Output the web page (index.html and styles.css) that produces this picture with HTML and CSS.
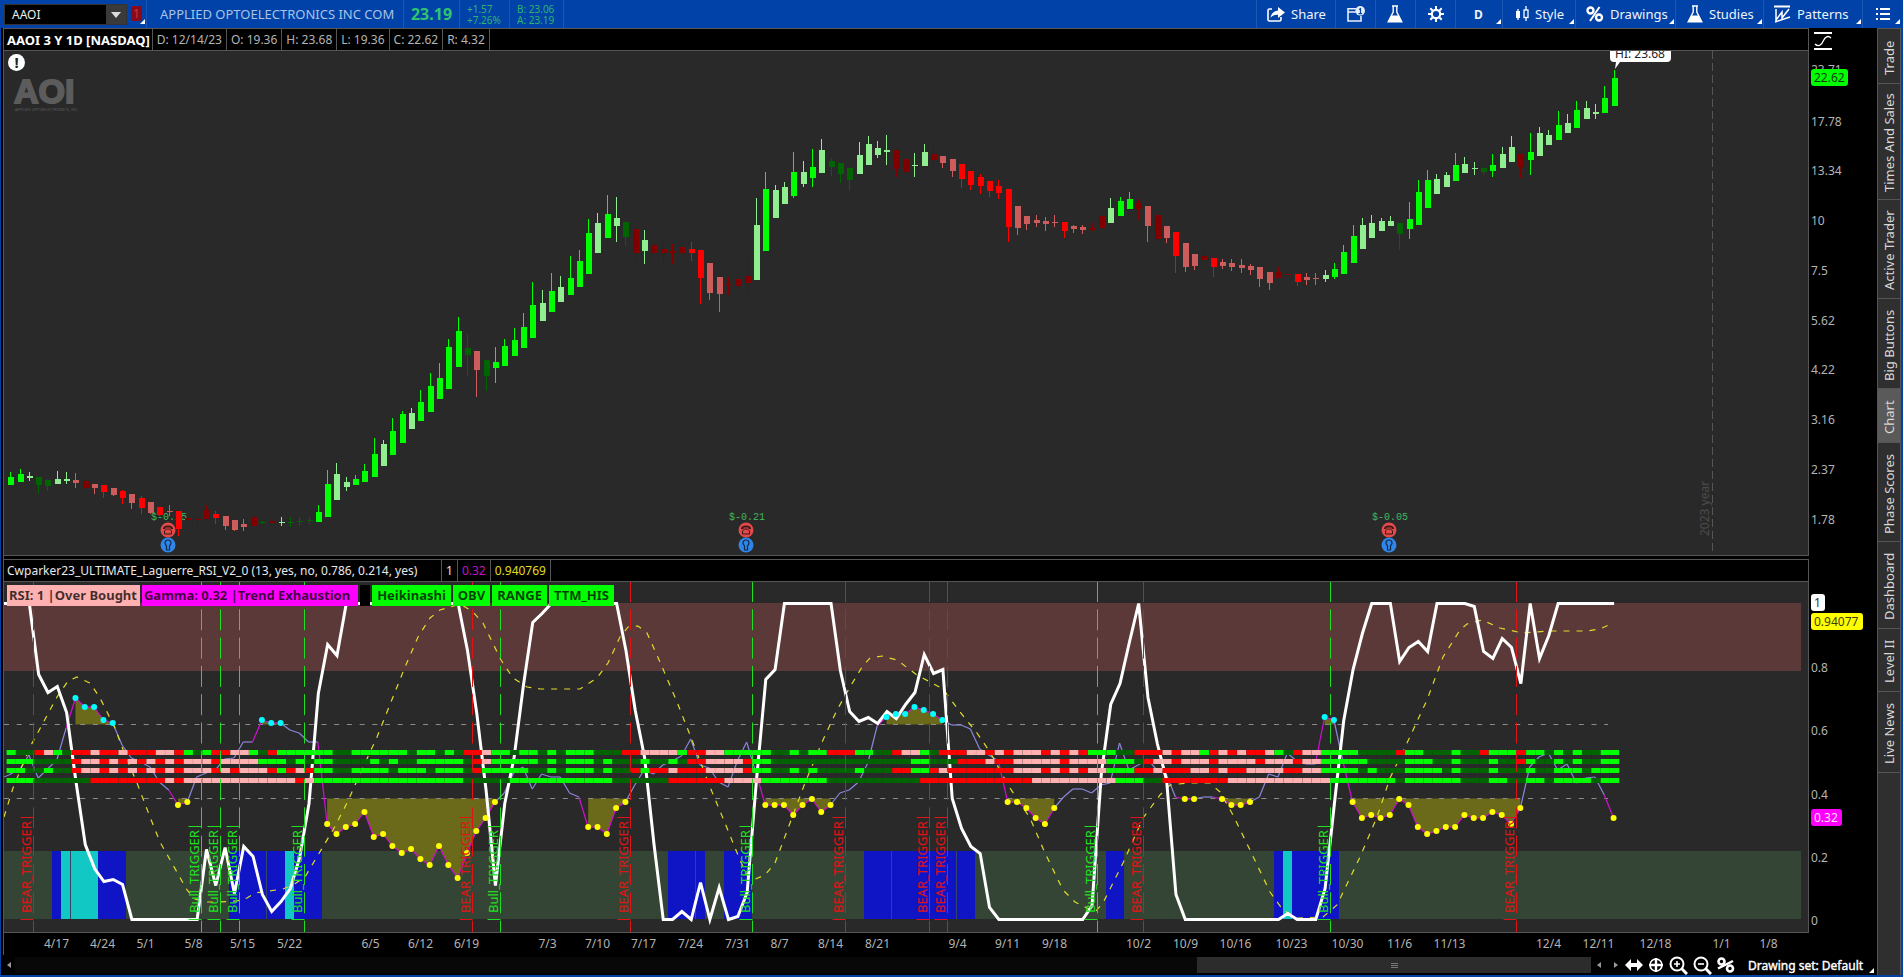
FILE: index.html
```html
<!DOCTYPE html>
<html lang="en">
<head>
    <meta charset="UTF-8">
    <meta name="viewport" content="width=device-width, initial-scale=1.0">
    <title>AAOI Chart</title>
    <link rel="stylesheet" href="styles.css">
</head>
<body>
    <header class="topbar">
        <div class="symbol-box">
            <input class="symbol-input" type="text" value="AAOI" aria-label="Symbol">
            <button class="symbol-arrow" aria-label="Symbol list"><svg width="10" height="6"><path d="M0 0H10L5 6Z" fill="#ddd"/></svg></button>
        </div>
        <button class="link-color corner" aria-label="Link 1"><span>1</span></button>
        <div class="company">APPLIED OPTOELECTRONICS INC COM</div>
        <div class="last">23.19</div>
        <div class="pair change"><span>+1.57</span><span>+7.26%</span></div>
        <div class="pair bidask"><span>B: 23.06</span><span>A: 23.19</span></div>
        <nav class="tools">
            <button class="tool w-share">
                <svg width="18" height="16" viewBox="0 0 18 16"><path d="M5 3H2.500Q1 3 1 4.500V13.500Q1 15 2.500 15H12.500Q14 15 14 13.500V11" fill="none" stroke="#fff" stroke-width="1.600"/><path d="M11 1L18 6.500L11 12V8.800Q6 8.500 3.500 12Q4.500 5 11 4.500Z" fill="#fff"/></svg>
                Share
            </button>
            <button class="tool w-icon" aria-label="News">
                <svg width="18" height="16" viewBox="0 0 18 16"><path d="M9 2.700H1V15H14V10M1 6H9" fill="none" stroke="#e8eefa" stroke-width="1.600"/><circle cx="13.200" cy="4.800" r="4.800" fill="#e8eefa"/><path d="M12 3.500L13.500 2.500V7.500M11.500 7.600H15.200" fill="none" stroke="#0042a8" stroke-width="1.200"/></svg>
            </button>
            <button class="tool w-icon" aria-label="Lab">
                <svg width="16" height="18" viewBox="0 0 16 18"><path d="M5 1H11M6.200 1V7L1.200 16.800H14.800L9.800 7V1" fill="none" stroke="#fff" stroke-width="1.400"/><path d="M4.500 10.500H11.500L15 17H1Z" fill="#fff"/></svg>
            </button>
            <button class="tool w-icon" aria-label="Settings">
                <svg width="18" height="18" viewBox="0 0 18 18"><circle cx="9" cy="9" r="4.200" fill="none" stroke="#fff" stroke-width="2.200"/><path d="M9 1V4M9 14V17M1 9H4M14 9H17M3.300 3.300L5.500 5.500M12.500 12.500L14.700 14.700M14.700 3.300L12.500 5.500M5.500 12.500L3.300 14.700" stroke="#fff" stroke-width="2"/></svg>
            </button>
            <button class="tool w-day corner"><b>D</b></button>
            <button class="tool w-style corner">
                <svg width="14" height="16" viewBox="0 0 14 16"><path d="M3 3V14M11 0V4M11 12V15" stroke="#fff" stroke-width="1.300"/><rect x="1" y="5" width="4" height="7" fill="#fff"/><rect x="9" y="4" width="4" height="7.500" fill="none" stroke="#fff" stroke-width="1.300"/></svg>
                Style
            </button>
            <button class="tool w-draw corner">
                <svg width="18" height="16" viewBox="0 0 18 16"><circle cx="4.500" cy="4.500" r="3" fill="none" stroke="#fff" stroke-width="2.400"/><circle cx="13" cy="11.500" r="3" fill="none" stroke="#fff" stroke-width="2.400"/><path d="M13.500 1L4 15" stroke="#fff" stroke-width="2"/></svg>
                Drawings
            </button>
            <button class="tool w-study corner">
                <svg width="16" height="18" viewBox="0 0 16 18"><path d="M5 1H11M6.200 1V7L1.200 16.800H14.800L9.800 7V1" fill="none" stroke="#fff" stroke-width="1.400"/><path d="M4.500 10.500H11.500L15 17H1Z" fill="#fff"/></svg>
                Studies
            </button>
            <button class="tool w-pattern corner">
                <svg width="17" height="18" viewBox="0 0 17 18"><path d="M0 1.500H16" stroke="#fff" stroke-width="2"/><path d="M2 4V15L8 7V13L15 4M1 17L16 12" fill="none" stroke="#fff" stroke-width="1.500"/></svg>
                Patterns
            </button>
            <button class="tool w-list corner" aria-label="Menu">
                <svg width="14" height="14" viewBox="0 0 14 14"><path d="M0 2H2M4 2H14M0 7H2M4 7H14M0 12H2M4 12H14" stroke="#fff" stroke-width="2"/></svg>
            </button>
        </nav>
    </header>

    <main class="workspace">
        <div class="chart-column">
            <div class="chart-area">
                <section class="panels">
                    <div class="info price-info">
                        <h1>AAOI 3 Y 1D [NASDAQ]</h1>
                        <span>D: 12/14/23</span>
                        <span>O: 19.36</span>
                        <span>H: 23.68</span>
                        <span>L: 19.36</span>
                        <span>C: 22.62</span>
                        <span>R: 4.32</span>
                    </div>
                    <svg class="plot price-plot" id="price" viewBox="4 51 1804 504"></svg>
                    <div class="info rsi-info">
                        <span class="study study-name">Cwparker23_ULTIMATE_Laguerre_RSI_V2_0 (13, yes, no, 0.786, 0.214, yes)</span>
                        <span class="study">1</span>
                        <span class="gamma">0.32</span>
                        <span class="fourier">0.940769</span>
                    </div>
                    <div class="rsi-wrap">
                        <svg class="plot" id="rsi" viewBox="4 582 1804 350"></svg>
                        <div class="labels">
                            <span class="pink">RSI: 1 |Over Bought</span>
                            <span class="magenta">Gamma: 0.32 |Trend Exhaustion</span>
                            <span class="blank"></span>
                            <span class="green">Heikinashi</span>
                            <span class="green">OBV</span>
                            <span class="green">RANGE</span>
                            <span class="green">TTM_HIS</span>
                        </div>
                    </div>
                    <svg class="dates" id="dates" viewBox="4 933 1804 22"></svg>
                </section>
                <aside class="axis">
                    <button class="axis-mode" aria-label="Axis settings"><svg width="18" height="18" viewBox="0 0 18 18"><path d="M0 1H18M0 17H18" stroke="#fff" stroke-width="2"/><path d="M1 12C5 16 8 12 9.500 8.500C11 5 14 3 17 6" fill="none" stroke="#fff" stroke-width="1.300"/></svg></button>
                    <svg class="axis-plot" id="axis" viewBox="1809 51 68 904"></svg>
                </aside>
            </div>
            <footer class="bottom">
                <button class="arrow" aria-label="Scroll left"><svg width="5" height="6"><path d="M4 0V6L0 3Z" fill="#999"/></svg></button>
                <div class="track"><div class="thumb"><i></i></div></div>
                <button class="arrow" aria-label="Step left"><svg width="5" height="6"><path d="M4 0V6L0 3Z" fill="#999"/></svg></button>
                <button class="arrow" aria-label="Step right"><svg width="5" height="6"><path d="M1 0V6L5 3Z" fill="#999"/></svg></button>
                <div class="zoom-tools">
                    <button aria-label="Pan"><svg width="18" height="12" viewBox="0 0 18 12"><path d="M0 6L6 0V4H12V0L18 6L12 12V8H6V12Z" fill="#fff"/></svg></button>
                    <button aria-label="Crosshair"><svg width="16" height="16" viewBox="0 0 16 16"><circle cx="8" cy="8" r="6" fill="none" stroke="#fff" stroke-width="1.600"/><path d="M8 1V15M1 8H15" stroke="#fff" stroke-width="2.400"/></svg></button>
                    <button aria-label="Zoom in"><svg width="19" height="19" viewBox="0 0 19 19"><circle cx="8" cy="8" r="6.500" fill="none" stroke="#fff" stroke-width="2"/><path d="M12.500 12.500L18 18" stroke="#fff" stroke-width="3"/><path d="M8 5V11M5 8H11" stroke="#fff" stroke-width="1.600"/></svg></button>
                    <button aria-label="Zoom out"><svg width="19" height="19" viewBox="0 0 19 19"><circle cx="8" cy="8" r="6.500" fill="none" stroke="#fff" stroke-width="2"/><path d="M12.500 12.500L18 18" stroke="#fff" stroke-width="3"/><path d="M5 8H11" stroke="#fff" stroke-width="1.600"/></svg></button>
                    <button aria-label="Percent"><svg width="18" height="16" viewBox="0 0 18 16"><circle cx="4.500" cy="4.500" r="3" fill="none" stroke="#fff" stroke-width="2.600"/><circle cx="13" cy="11.500" r="3" fill="none" stroke="#fff" stroke-width="2.600"/><path d="M16 4L1 11.500" stroke="#fff" stroke-width="2.400"/></svg></button>
                </div>
                <button class="drawing-set corner">Drawing set: Default</button>
            </footer>
        </div>
        <nav class="sidebar">
            <button class="t1">Trade</button>
            <button class="t2">Times And Sales</button>
            <button class="t3">Active Trader</button>
            <button class="t4">Big Buttons</button>
            <button class="t5 active">Chart</button>
            <button class="t3">Phase Scores</button>
            <button class="t6">Dashboard</button>
            <button class="t7">Level II</button>
            <button class="t8">Live News</button>
        </nav>
    </main>
    <script src="script.js"></script>
</body>
</html>
```

FILE: styles.css
```css
* {
    box-sizing: border-box;
}
body {
    margin: 0;
    height: 100vh;
    display: flex;
    flex-direction: column;
    background: #000;
    border: solid #0042a8;
    border-width: 0 2px 2px 1px;
    font-family: "Noto Sans", "Open Sans", sans-serif;
    font-size: 12px;
    color: #b4b4b4;
    overflow: hidden;
}
button {
    border: none;
    background: none;
    padding: 0;
    margin: 0;
    font: inherit;
    color: inherit;
    cursor: pointer;
}
svg {
    display: block;
    flex: none;
}

/* top bar */
.topbar {
    display: flex;
    align-items: stretch;
    height: 28px;
    flex: none;
    background: #0042a8;
}
.symbol-box {
    display: flex;
    width: 123px;
    margin: 4px 4px 3px 3px;
    background: #000;
    border: 1px solid #333;
}
.symbol-input {
    flex: 1;
    min-width: 0;
    border: none;
    background: #000;
    color: #eee;
    font: inherit;
    padding: 0 7px;
}
.symbol-arrow {
    width: 20px;
    background: #3a3a3a;
    display: flex;
    align-items: center;
    justify-content: center;
}
.corner {
    position: relative;
}
.corner::after {
    content: "";
    position: absolute;
    right: 1px;
    bottom: 4px;
    border: solid transparent;
    border-width: 0 0 5px 5px;
    border-bottom-color: #fff;
}
.link-color {
    width: 16px;
    display: flex;
    align-items: flex-start;
    padding-top: 6px;
    border-right: 1px solid #1c57b4;
}
.link-color span {
    width: 11px;
    height: 15px;
    line-height: 15px;
    border-radius: 2px;
    background: #8b0a1a;
    color: #c33;
}
.company {
    width: 257px;
    padding-left: 13px;
    line-height: 28px;
    font-size: 13px;
    color: #a9c2e6;
    border-right: 1px solid #1c57b4;
    white-space: nowrap;
}
.last {
    width: 56px;
    text-align: center;
    line-height: 28px;
    font-size: 16px;
    font-weight: bold;
    color: #2fc46e;
    border-right: 1px solid #1c57b4;
}
.pair {
    display: flex;
    flex-direction: column;
    justify-content: center;
    padding-left: 7px;
    padding-top: 2px;
    font-size: 10px;
    line-height: 11px;
    color: #2fb56a;
    border-right: 1px solid #1c57b4;
}
.change {
    width: 50px;
}
.bidask {
    width: 54px;
}
.tools {
    display: flex;
    margin-left: auto;
}
.tool {
    display: flex;
    align-items: center;
    gap: 6px;
    padding-left: 8px;
    border-left: 1px solid #1c57b4;
    color: #eef3fb;
    font-size: 13px;
}
.w-share { width: 79px; padding-left: 10px; }
.w-icon { width: 40px; padding-left: 11px; }
.w-day { width: 47px; padding-left: 18px; font-size: 12px; }
.w-style { width: 73px; padding-left: 12px; }
.w-draw { width: 100px; padding-left: 10px; }
.w-study { width: 88px; padding-left: 11px; }
.w-pattern { width: 99px; padding-left: 10px; }
.w-list { width: 39px; padding-left: 13px; }

/* charts */
.workspace {
    flex: 1;
    min-height: 0;
    display: flex;
}
.chart-column {
    flex: 1;
    min-width: 0;
    display: flex;
    flex-direction: column;
    padding-left: 2px;
}
.chart-area {
    flex: 1;
    min-height: 0;
    display: flex;
}
.panels {
    flex: 1;
    min-width: 0;
    display: flex;
    flex-direction: column;
    border-left: 1px solid #555;
}
.info {
    display: flex;
    flex: none;
    border-bottom: 1px solid #555;
    border-right: 1px solid #555;
}
.price-info {
    height: 23px;
    line-height: 22px;
    border-top: 1px solid #555;
}
.info h1 {
    margin: 0;
    padding: 0 2px 0 3px;
    font-size: 13px;
    color: #fff;
    border-right: 1px solid #555;
}
.info span {
    padding: 0 4px;
    border-right: 1px solid #555;
}
.rsi-info {
    height: 23px;
    line-height: 21px;
    margin-top: 3px;
    border-top: 1px solid #555;
}
.info .study {
    color: #e8e8e8;
}
.info .study-name {
    min-width: 438px;
    padding-left: 3px;
}
.info .gamma {
    color: #c012c8;
}
.info .fourier {
    color: #e0dc20;
}
.plot {
    width: 100%;
    min-height: 0;
    background: #292929;
    border-right: 1px solid #555;
    border-bottom: 1px solid #555;
}
.price-plot {
    flex: 504 1 0;
}
.rsi-wrap {
    position: relative;
    flex: 351 1 0;
    min-height: 0;
}
.rsi-wrap .plot {
    height: 100%;
}
.labels {
    position: absolute;
    left: 3px;
    top: 3px;
    display: flex;
    gap: 2px;
    font-size: 13px;
    font-weight: bold;
    color: rgba(0, 0, 0, 0.75);
}
.labels span {
    height: 21px;
    line-height: 21px;
    padding: 0 5px;
    white-space: nowrap;
}
.labels .pink { background: #ffb0b0; padding: 0 3px 0 2px; }
.labels .magenta { background: #ff00ff; padding: 0 8px 0 2px; }
.labels .blank { background: #000; }
.labels .green { background: #00ff00; }
.dates {
    width: 100%;
    height: 22px;
}
.axis {
    width: 68px;
    flex: none;
    display: flex;
    flex-direction: column;
}
.axis-mode {
    height: 23px;
    padding: 2px 0 0 5px;
}
.axis-plot {
    width: 100%;
    flex: 1;
    min-height: 0;
}
svg text {
    font-size: 12px;
    fill: #b4b4b4;
}
svg .trigger {
    font-size: 13px;
}
svg .logo {
    font: bold 34px "Liberation Sans", sans-serif;
    fill: #5c5c5c;
    stroke: #5c5c5c;
    stroke-width: 2px;
}
svg .logo-small {
    font-size: 4px;
    fill: #5c5c5c;
}
svg .eps {
    font: 10px "Liberation Mono", monospace;
    fill: #3fb85e;
}
.mid {
    text-anchor: middle;
}

/* bottom row */
.bottom {
    height: 20px;
    flex: none;
    display: flex;
    align-items: center;
}
.arrow {
    width: 16px;
    height: 16px;
    display: flex;
    align-items: center;
    justify-content: center;
}
.bottom > .arrow:first-child {
    width: 12px;
}
.track {
    flex: 1;
    height: 16px;
    display: flex;
    justify-content: flex-end;
    background: #080808;
}
.thumb {
    width: 25%;
    background: #2c2c2c;
    display: flex;
    align-items: center;
    justify-content: center;
}
.thumb i {
    width: 7px;
    height: 5px;
    background: repeating-linear-gradient(#777 0 1px, #2c2c2c 1px 2px);
}
.zoom-tools {
    display: flex;
    align-items: center;
    gap: 5px;
    margin-left: 2px;
}
.drawing-set {
    width: 127px;
    margin: 0 2px 0 13px;
    text-align: left;
    color: #fff;
    -webkit-text-stroke: 0.4px #fff;
}
.drawing-set.corner::after {
    bottom: 1px;
}

/* right tabs */
.sidebar {
    width: 24px;
    flex: none;
    display: flex;
    flex-direction: column;
    background: #2f2f2f;
    border: solid #555;
    border-width: 1px 1px 0 1px;
}
.sidebar button {
    flex: none;
    writing-mode: vertical-rl;
    transform: rotate(180deg);
    border-top: 1px solid #555;
    padding-bottom: 3px;
    text-align: center;
    font-size: 13px;
    color: #d8d8d8;
}
.sidebar .active {
    background: #5a5a5a;
}
.t1 { height: 55px; }
.t2 { height: 116px; }
.t3 { height: 99px; }
.t4 { height: 90px; }
.t5 { height: 54px; }
.t6 { height: 87px; }
.t7 { height: 63px; }
.t8 { height: 81px; }
```

FILE: script.js
```js
const STEP = 9.322;
const xAt = i => 11.2 + STEP * i;
const colors = { G: "#00ff00", L: "#90ee90", D: "#006400", R: "#ff0000", P: "#cd5c5c", M: "#800000" };

// colour, high, body top, body bottom, low
const candles = `
G472,477,485,485 G469,474,482,482 L472,476,478,481 D477,477,485,493 D479,480,486,491 L471,479,484,484
L472,479,481,484 P473,480,483,488 M481,481,488,489 P484,484,488,494 R485,485,492,498 P488,488,495,496
R490,491,498,504 P494,494,503,509 R496,498,508,514 P502,502,513,514 R507,507,515,516 P505,511,512,516
R511,511,529,536 M517,518,520,521 M516,519,520,527 M505,510,519,519 R511,514,518,524 P516,516,526,530
P520,520,530,531 P519,524,527,531 M516,517,526,526 D521,522,523,524 M520,521,523,525 L517,522,523,526
D517,522,523,527 D517,521,522,526 D517,520,521,524 G505,512,522,522 G470,484,517,517 L463,474,500,500
L477,482,487,491 G475,479,485,485 G464,471,482,482 G438,454,477,477 L440,444,466,466 G418,431,455,455
G411,414,443,443 L408,413,429,429 G390,402,421,421 G373,386,412,412 G363,378,399,399 G339,347,389,389
G317,331,367,367 D334,348,355,376 P351,351,370,397 D360,360,376,391 G347,362,368,383 G339,346,366,366
G328,340,356,356 G313,327,348,348 G282,305,338,338 L290,303,321,321 G273,291,312,312 L276,287,302,302
G256,278,295,295 G250,261,287,287 G219,233,274,274 L213,223,253,253 G195,214,238,238 L197,218,226,242
D222,222,237,246 M228,229,253,268 L230,240,251,264 M244,245,253,261 M240,249,253,264 M244,251,253,264
M236,247,253,253 R242,249,253,261 R250,250,278,304 P263,263,293,300 P277,277,294,312 M277,284,285,295
M268,279,286,290 M256,276,283,295 L198,225,280,280 G172,189,251,251 L185,190,218,218 L182,187,204,204
G152,172,196,198 L161,172,184,187 G149,167,178,187 L139,150,173,173 D158,161,167,176 D163,163,174,183
D168,168,180,191 L142,155,174,174 L136,144,165,165 L141,148,155,158 L135,150,152,165 M150,150,169,177
M159,159,172,177 L153,165,166,177 L144,152,166,166 M141,154,160,167 P156,156,163,168 P159,159,171,177
R164,164,179,188 R171,171,185,190 R174,177,186,194 R181,181,191,197 R180,186,193,199 R189,189,227,242
P206,206,228,235 P216,216,224,230 P215,220,223,227 P217,221,224,231 P215,222,223,227 R222,222,231,238
P225,226,229,233 P225,227,230,234 M223,228,230,231 M213,216,228,228 L198,208,223,223 G197,201,216,216
G192,199,209,209 M199,203,209,220 P206,206,226,242 M215,215,239,246 P226,226,238,243 R232,232,256,273
P243,243,267,272 P254,254,266,270 M244,256,260,260 R258,258,267,277 P259,262,266,269 P259,263,267,271
P259,265,268,273 P264,266,270,275 P267,267,279,287 P272,272,283,290 M267,272,278,278 M271,274,275,278
R274,274,282,286 P273,277,280,285 P273,278,279,285 L270,275,279,282 G263,269,277,279 G245,252,274,274
G225,236,263,263 L218,225,249,249 L215,223,238,238 L218,221,231,231 L216,221,226,226 D223,223,234,250
G202,219,229,239 G180,192,225,225 G170,180,208,208 L174,179,194,194 L172,175,187,187 G153,165,181,181
L157,164,173,173 L162,168,169,175 D168,168,172,175 G154,165,171,177 L147,154,168,168 L136,147,162,162
M154,154,167,178 G133,152,160,175 L127,133,156,156 L130,135,145,145 G111,125,140,140 L114,123,133,133
G101,110,128,128 L101,108,119,119 L104,112,114,119 G86,98,113,113 G70,78,106,106`.trim().split(/\s+/);

function earnings(x, label) {
    return `<text class="mid eps" x="${x + 1}" y="520">${label}</text>
        <circle cx="${x}" cy="530" r="7.500" fill="#e04a4a"/>
        <path d="M${x - 5} 529Q${x - 5} 525.500 ${x} 525.500Q${x + 5} 525.500 ${x + 5} 529H${x + 2.500}V527.500H${x - 2.500}V529Z" fill="#3a1515"/>
        <path d="M${x - 3.500} 534V531L${x - 1.500} 529H${x + 1.500}L${x + 3.500} 531V534Z" fill="none" stroke="#3a1515"/>
        <circle cx="${x}" cy="545" r="7.500" fill="#2f86e8"/>
        <path d="M${x - 1.500} 547.500V546L${x - 3} 543.500Q${x - 3} 540 ${x} 540Q${x + 3} 540 ${x + 3} 543.500L${x + 1.500} 546V550H${x - 1.500}Z" fill="none" stroke="#10294a" stroke-width="1.200"/>`;
}

function drawPrice() {
    let s = `<path d="M1712.500 51V555" stroke="#555" stroke-dasharray="8 4"/>
        <text x="1709" y="536" transform="rotate(-90 1709 536)" style="fill:#4c4c4c">2023 year</text>
        <circle cx="16.500" cy="62.500" r="8.500" fill="#fff"/>
        <text class="mid" x="16.500" y="68" style="font-size:15px;font-weight:bold;fill:#222">!</text>
        <text class="logo" x="14" y="103">AOI</text>
        <text class="logo-small" x="15" y="111">APPLIED OPTOELECTRONICS, INC</text>`;
    s += earnings(168, "$-0.15") + earnings(746, "$-0.21") + earnings(1389, "$-0.05");
    s += '<g shape-rendering="crispEdges">';
    candles.forEach((c, i) => {
        const [hi, top, bottom, lo] = c.slice(1).split(",").map(Number);
        const x = Math.round(xAt(i));
        s += `<path fill="${colors[c[0]]}" d="M${x - 1} ${hi}h1V${lo}h-1ZM${x - 3} ${top}h6V${bottom}h-6Z"/>`;
    });
    s += "</g>";
    s += `<path d="M1610 44H1671V58Q1671 62 1667 62H1620L1615 69L1616 62H1614Q1610 62 1610 58Z" fill="#fff"/>
        <text x="1615" y="58" style="fill:#222">HI: 23.68</text>`;
    document.getElementById("price").innerHTML = s;
}

// run-length colours of the four indicator rows
const rows = [
    [750, "G1 D2 R1 P1 G1 D1 R2 P1 R2 P1 R3 P2 R1 G1 D1 G1 R2 P2 G1 D1 R1 G6 D2 G6 D1 G2 D1 G1 D1 R2 P1 G2 D1 G2 D1 G1 D1 G3 D3 R2 P4 G1 R2 P2 G5 D2 G1 D1 G2 R3 G2 D2 R1 P2 G1 D1 R3 P2 R1 P1 R1 P3 R1 P1 R1 P1 R1 G3 D2 R3 P1 R1 P2 G1 R1 P1 R1 P1 R2 P1 G1 D1 R1 P2 G4 D4 R1 G2 D3 G1 D2 R1 G3 R1 G2 D1 G1 D1 G1 D2 G2"],
    [759, "G3 D4 R1 P2 R1 P1 R1 P1 R1 P1 R1 P1 R1 P3 R1 P4 G3 D1 G1 D1 G2 D4 G1 D1 G1 D2 G5 D1 R1 P1 G5 D1 G1 D1 G3 D1 G1 D3 G1 D2 G1 D1 R2 P4 R1 G2 D15 G2 D3 R3 P1 R2 P5 R1 P4 G3 D1 R1 P2 R1 P3 R1 P4 R1 P3 R1 P2 G5 D4 G3 D2 G1 D3 G1 D2 R1 G1 D2 G1 D1 G1 D2 G2"],
    [768, "G2 D2 G1 D2 R1 P2 R1 P1 R1 P1 R1 P1 R1 P1 R1 P3 R1 P1 R1 P3 R1 G1 R1 P1 R1 G2 D2 G4 D1 G3 D1 G3 D1 R1 G5 D2 G1 D1 G3 D1 G1 D2 R1 G1 R2 P1 R3 P4 R1 G2 D2 G1 D1 G1 D4 G1 D3 R2 G2 R1 P1 R7 P3 R1 P1 R1 P1 R1 P2 G3 R2 P1 R3 P2 R1 P1 R2 P4 R2 P2 G4 D1 G1 D3 G4 D1 G1 D3 G1 D3 G1 D2 G3 D1 G3"],
    [778, "G3 D6 R8 P1 R1 P12 R1 P1 G16 D5 G11 D6 R6 P4 G7 D10 R12 P9 G3 D2 R7 P11 G7 D1 G6 D3 G2 D2 G2 D1 G4 D1 G2"]
];
const rowColors = { G: "#00ff00", D: "#006400", R: "#ff0000", P: "#ffb0b0" };

// bar index, y
const rsiLine = [[-1, 603], [2, 603], [3, 674], [4, 692], [5, 686], [6, 712], [7, 781], [8, 844], [9, 868], [10, 881], [11, 879], [12, 884], [13, 919],
    [20, 919], [21, 849], [22, 885], [23, 847], [24, 893], [25, 846], [26, 856], [27, 894], [28, 911], [29, 901], [30, 888], [31, 857], [32, 803], [33, 693],
    [34, 644], [35, 655], [36, 603], [48, 603], [49, 650], [50, 713], [51, 790], [52, 885], [53, 803], [54, 757], [55, 685], [56, 622], [57, 613], [58, 603],
    [65, 603], [66, 650], [67, 710], [68, 757], [69, 843], [70, 919], [71, 919], [72, 911], [73, 919], [74, 882], [75, 919], [76, 887], [77, 919], [78, 916],
    [79, 892], [80, 780], [81, 679], [82, 669], [83, 603], [88, 603], [89, 670], [90, 711], [91, 721], [92, 717], [93, 723], [94, 711], [95, 718], [96, 704],
    [97, 692], [98, 654], [99, 673], [100, 669], [101, 798], [102, 828], [103, 846], [104, 853], [105, 907], [106, 919], [115, 919], [116, 905], [117, 773],
    [118, 704], [119, 683], [120, 642], [121, 603], [122, 697], [123, 743], [124, 780], [125, 894], [126, 919], [136, 919], [137, 913], [138, 919], [140, 919],
    [141, 888], [142, 803], [143, 720], [144, 669], [145, 633], [146, 603], [148, 603], [149, 661], [150, 647], [151, 641], [152, 651], [153, 603], [156, 603],
    [157, 606], [158, 651], [159, 658], [160, 638], [161, 647], [162, 683], [163, 603], [164, 658], [165, 635], [166, 603], [172, 603]];

const gamma = [774, 770, 755, 778, 769, 760, 728, 698, 707, 707, 720, 723, 745, 758, 762, 767, 782, 790, 805, 802, 777, 773, 770, 759, 758, 742, 742, 720, 723,
    723, 730, 733, 742, 742, 824, 834, 827, 824, 812, 837, 834, 846, 853, 849, 859, 865, 846, 865, 878, 853, 831, 818, 802, 793, 773, 767, 789, 774, 777, 777,
    793, 797, 827, 827, 834, 808, 802, 785, 770, 774, 765, 761, 756, 739, 765, 768, 782, 787, 761, 742, 773, 805, 805, 805, 815, 805, 799, 812, 805, 793, 790,
    782, 763, 726, 717, 714, 714, 707, 710, 714, 720, 725, 725, 729, 749, 755, 761, 802, 802, 808, 818, 824, 808, 797, 789, 789, 793, 785, 783, 743, 770, 765,
    759, 770, 774, 797, 799, 799, 797, 797, 799, 805, 805, 802, 797, 774, 777, 753, 761, 764, 764, 717, 720, 763, 802, 818, 815, 818, 815, 799, 805, 827, 834,
    831, 827, 827, 815, 818, 818, 812, 815, 824, 808, 767, 757, 753, 770, 764, 783, 778, 777, 795, 818];

const fourier = [[4, 817], [13, 788], [30, 747], [43, 723], [57, 697], [68, 681], [77, 677], [90, 683], [100, 698], [115, 728], [125, 755], [137, 783],
    [150, 817], [160, 842], [173, 865], [187, 890], [195, 899], [205, 902], [218, 902], [237, 901], [247, 898], [255, 893], [283, 889], [293, 885], [305, 877],
    [318, 855], [333, 830], [347, 803], [365, 763], [377, 737], [393, 697], [405, 667], [418, 637], [430, 618], [440, 610], [460, 604], [472, 611], [483, 623],
    [501, 660], [513, 678], [527, 687], [540, 689], [580, 689], [597, 678], [608, 663], [620, 637], [628, 627], [638, 626], [647, 633], [660, 662], [677, 702],
    [692, 740], [710, 787], [727, 828], [740, 860], [747, 875], [753, 880], [765, 875], [775, 863], [790, 823], [805, 783], [823, 740], [837, 710], [850, 687],
    [862, 667], [870, 658], [882, 656], [897, 660], [917, 675], [943, 689], [960, 712], [977, 733], [990, 752], [1008, 785], [1030, 818], [1045, 853],
    [1063, 890], [1075, 902], [1095, 912], [1103, 903], [1123, 863], [1143, 818], [1160, 795], [1170, 785], [1187, 783], [1210, 783], [1220, 792], [1233, 815],
    [1250, 850], [1270, 892], [1283, 910], [1297, 918], [1323, 917], [1337, 905], [1360, 857], [1377, 817], [1390, 778], [1407, 743], [1427, 700], [1443, 657],
    [1460, 630], [1467, 624], [1482, 620], [1500, 628], [1522, 633], [1550, 631], [1587, 631], [1600, 629], [1613, 623]];

const bull = [201, 220, 239, 304, 500, 752, 1097, 1330];
const bear = [33, 472, 630, 845, 929, 947, 1143, 1516];
const HIGH = 724.5, LOW = 798.5;

function trigger(x, name, color, top) {
    x += 0.5;
    return `<g stroke="${color}"><path d="M${x} 581V932" stroke-dasharray="21 7.300"/>
        <path d="M${x - 13} ${top}.500H${x}M${x - 13} 919.500H${x}"/></g>
        <text class="trigger" x="${x - 3}" y="913" transform="rotate(-90 ${x - 3} 913)" style="fill:${color}">${name}</text>`;
}

function drawRsi() {
    const rect = (x, y, w, h, fill) => `<rect x="${x}" y="${y}" width="${w}" height="${h}" fill="${fill}"/>`;
    const isDot = y => y <= 723 || y >= 799;
    let s = rect(4, 603, 1797, 68, "#5b3938") + rect(4, 851, 1797, 68, "#354535");
    [[52, 74], [229, 93], [668, 37], [724, 28], [864, 111], [1106, 18], [1274, 65]].forEach(b => s += rect(b[0], 851, b[1], 68, "#0f14c4"));
    [[61, 37], [285, 9], [1283, 9]].forEach(b => s += rect(b[0], 851, b[1], 68, "#11c8c4"));
    [70, 266, 695, 891, 929, 956].forEach(x => s += rect(x, 851, 1, 68, "#354565"));

    // filled areas under each run of dots
    let run = [];
    gamma.concat(760).forEach((y, i) => {
        if (isDot(y)) {
            run.push([xAt(i) - 1, y]);
        } else {
            if (run.length > 1) {
                const base = run[0][1] < 760 ? HIGH : LOW;
                s += `<path fill="#6b691a" d="M${run[0][0]} ${base}L${run.join("L")}L${run[run.length - 1][0]} ${base}Z"/>`;
            }
            run = [];
        }
    });

    s += `<path d="M4 ${HIGH}H1608M4 ${LOW}H1608" stroke="#8c8c8c" stroke-dasharray="5 7.700"/>`;
    s += `<polyline points="4,777 ${xAt(0)},774" fill="none" stroke="#8888dd"/>`;
    for (let i = 1; i < gamma.length; i++) {
        const color = isDot(gamma[i]) ? "#d010d0" : "#8888dd";
        s += `<path d="M${xAt(i - 1) - 1} ${gamma[i - 1]}L${xAt(i) - 1} ${gamma[i]}" stroke="${color}" stroke-width="1.200"/>`;
    }
    s += `<polyline points="${fourier.join(" ")}" fill="none" stroke="#e0dc2a" stroke-width="1.200" stroke-dasharray="6 7"/>`;
    s += `<polyline points="${rsiLine.map(p => [xAt(p[0]) - 0.5, p[1] + 0.5]).join(" ")}" fill="none" stroke="#fff" stroke-width="3"/>`;

    rows.forEach(([y, runs]) => {
        let i = 0;
        runs.split(" ").forEach(r => {
            for (let n = +r.slice(1); n > 0; n--, i++) {
                s += rect(xAt(i) - 4.6, y, 9.2, 5, rowColors[r[0]]);
            }
        });
    });
    gamma.forEach((y, i) => {
        if (isDot(y)) s += `<circle cx="${xAt(i) - 1}" cy="${y}" r="3" fill="${y < 760 ? "#00ffff" : "#ffff00"}"/>`;
    });
    bull.forEach(x => s += trigger(x, "Bull_TRIGGER", "#1fe01f", 826));
    bear.forEach(x => s += trigger(x, "BEAR_TRIGGER", "#e01414", 817));
    document.getElementById("rsi").innerHTML = s;
}

function drawDates() {
    const dates = [["4/17", 56], ["4/24", 102], ["5/1", 145], ["5/8", 193], ["5/15", 242], ["5/22", 289], ["6/5", 370], ["6/12", 420], ["6/19", 466],
        ["7/3", 547], ["7/10", 597], ["7/17", 643], ["7/24", 690], ["7/31", 737], ["8/7", 779], ["8/14", 830], ["8/21", 877], ["9/4", 957], ["9/11", 1007],
        ["9/18", 1054], ["10/2", 1138], ["10/9", 1185], ["10/16", 1235], ["10/23", 1291], ["10/30", 1347], ["11/6", 1399], ["11/13", 1449], ["12/4", 1548],
        ["12/11", 1598], ["12/18", 1655], ["1/1", 1721], ["1/8", 1768]];
    document.getElementById("dates").innerHTML = dates.map(d => `<text class="mid" x="${d[1]}" y="948">${d[0]}</text>`).join("");
}

function drawAxis() {
    const ticks = [["23.71", 69], ["17.78", 121], ["13.34", 170], ["10", 220], ["7.5", 270], ["5.62", 320], ["4.22", 369], ["3.16", 419], ["2.37", 469],
        ["1.78", 519], ["0.8", 667], ["0.6", 730], ["0.4", 794], ["0.2", 857], ["0", 920]];
    const badges = [["22.62", 69, 37, "#00ff00", "#143c14"], ["1", 594, 14, "#fff", "#333"], ["0.94077", 613, 52, "#ffff00", "#3c3c14"], ["0.32", 809, 31, "#ff00ff", "#ffe0ff"]];
    let s = ticks.map(t => `<text x="1811" y="${t[1] + 5}">${t[0]}</text>`).join("");
    s += badges.map(b => `<rect x="1811" y="${b[1]}" width="${b[2]}" height="17" rx="3" fill="${b[3]}"/>
        <text x="1814" y="${b[1] + 13}" style="fill:${b[4]}">${b[0]}</text>`).join("");
    document.getElementById("axis").innerHTML = s;
}

drawPrice();
drawRsi();
drawDates();
drawAxis();
```
